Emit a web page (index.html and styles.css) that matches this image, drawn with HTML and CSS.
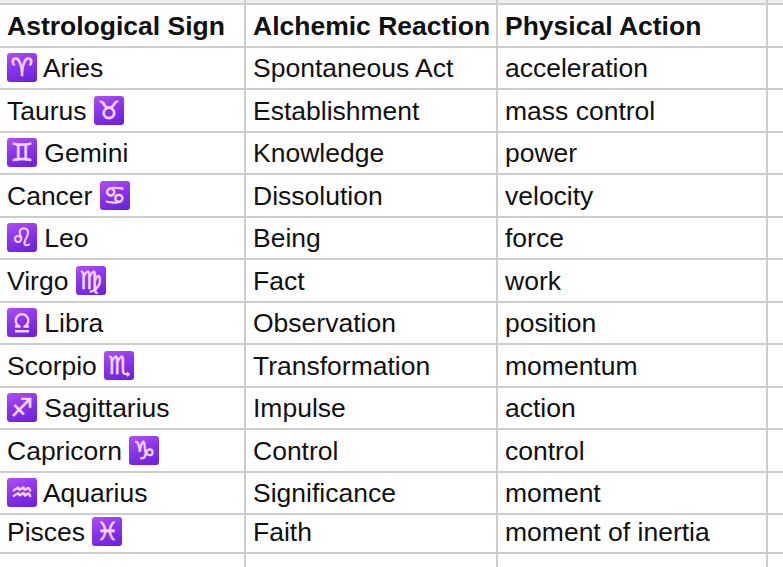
FILE: index.html
```html
<!DOCTYPE html>
<html>
<head>
<meta charset="utf-8">
<link rel="stylesheet" href="styles.css">
</head>
<body>
<div class="sheet">
  <div class="band"></div><div class="band"></div><div class="band"></div><div class="band"></div>

  <div class="cell r-a b"><span class="t">Astrological Sign</span></div><div class="cell r-a b"><span class="t">Alchemic Reaction</span></div><div class="cell r-a b"><span class="t">Physical Action</span></div><div class="cell r-a"></div>

  <div class="cell r-b"><span class="t"><span class="em">&#x2648;&#xFE0E;</span> Aries</span></div><div class="cell r-b"><span class="t">Spontaneous Act</span></div><div class="cell r-b"><span class="t">acceleration</span></div><div class="cell r-b"></div>

  <div class="cell r-a"><span class="t">Taurus <span class="em">&#x2649;&#xFE0E;</span></span></div><div class="cell r-a"><span class="t">Establishment</span></div><div class="cell r-a"><span class="t">mass control</span></div><div class="cell r-a"></div>

  <div class="cell r-b"><span class="t"><span class="em">&#x264A;&#xFE0E;</span> Gemini</span></div><div class="cell r-b"><span class="t">Knowledge</span></div><div class="cell r-b"><span class="t">power</span></div><div class="cell r-b"></div>

  <div class="cell r-a"><span class="t">Cancer <span class="em">&#x264B;&#xFE0E;</span></span></div><div class="cell r-a"><span class="t">Dissolution</span></div><div class="cell r-a"><span class="t">velocity</span></div><div class="cell r-a"></div>

  <div class="cell r-b"><span class="t"><span class="em">&#x264C;&#xFE0E;</span> Leo</span></div><div class="cell r-b"><span class="t">Being</span></div><div class="cell r-b"><span class="t">force</span></div><div class="cell r-b"></div>

  <div class="cell r-a"><span class="t">Virgo <span class="em">&#x264D;&#xFE0E;</span></span></div><div class="cell r-a"><span class="t">Fact</span></div><div class="cell r-a"><span class="t">work</span></div><div class="cell r-a"></div>

  <div class="cell r-b"><span class="t"><span class="em" role="img" aria-label="Libra"><svg class="glyph" viewBox="0 0 30 29" width="30" height="29"><path d="M8 18.5h4.6a6.4 6.4 0 1 1 4.8 0H22" fill="none" stroke="#f6d6ff" stroke-width="2.4" stroke-linejoin="round"/><path d="M8 23.2h14" fill="none" stroke="#f6d6ff" stroke-width="2.4"/></svg></span> Libra</span></div><div class="cell r-b"><span class="t">Observation</span></div><div class="cell r-b"><span class="t">position</span></div><div class="cell r-b"></div>

  <div class="cell r-a"><span class="t">Scorpio <span class="em">&#x264F;&#xFE0E;</span></span></div><div class="cell r-a"><span class="t">Transformation</span></div><div class="cell r-a"><span class="t">momentum</span></div><div class="cell r-a"></div>

  <div class="cell r-b"><span class="t"><span class="em">&#x2650;&#xFE0E;</span> Sagittarius</span></div><div class="cell r-b"><span class="t">Impulse</span></div><div class="cell r-b"><span class="t">action</span></div><div class="cell r-b"></div>

  <div class="cell r-a"><span class="t">Capricorn <span class="em">&#x2651;&#xFE0E;</span></span></div><div class="cell r-a"><span class="t">Control</span></div><div class="cell r-a"><span class="t">control</span></div><div class="cell r-a"></div>

  <div class="cell r-b"><span class="t"><span class="em">&#x2652;&#xFE0E;</span> Aquarius</span></div><div class="cell r-b"><span class="t">Significance</span></div><div class="cell r-b"><span class="t">moment</span></div><div class="cell r-b"></div>

  <div class="cell r-c"><span class="t">Pisces <span class="em">&#x2653;&#xFE0E;</span></span></div><div class="cell r-c"><span class="t">Faith</span></div><div class="cell r-c"><span class="t">moment of inertia</span></div><div class="cell r-c"></div>

  <div class="cell r-d"></div><div class="cell r-d"></div><div class="cell r-d"></div><div class="cell r-d"></div>
</div>
</body>
</html>
```
FILE: styles.css
```css
html, body {
  margin: 0;
  padding: 0;
  background: #ffffff;
}

.sheet {
  display: grid;
  grid-template-columns: 244px 250px 268px 1fr;
  column-gap: 2px;
  row-gap: 2px;
  background: #cdcdcd;
  width: 783px;
  height: 567px;
  overflow: hidden;
  font-family: "Liberation Sans", Arial, sans-serif;
  font-size: 26.5px;
  color: #111111;
}

.band {
  height: 3px;
  background: #efefef;
}

.cell {
  background: #ffffff;
  display: flex;
  align-items: flex-end;
  padding: 0 0 5px 7px;
  line-height: 30px;
  white-space: nowrap;
  box-sizing: border-box;
}

.t {
  display: block;
  white-space: pre;
}

.r-a { height: 41px; }
.r-b { height: 40px; }
.r-c { height: 37px; }
.r-d { height: 20px; }

.b {
  font-weight: bold;
}

.em {
  display: inline-block;
  width: 30px;
  height: 29px;
  line-height: 29px;
  overflow: hidden;
  vertical-align: -5px;
  text-align: center;
  border-radius: 3px;
  background: linear-gradient(160deg, #b24ef6 0%, #8a35ea 45%, #6a1fd6 100%);
  color: #f6d6ff;
  font-family: "DejaVu Sans", sans-serif;
  font-size: 25px;
  font-weight: bold;
  -webkit-text-stroke: 0.6px #f6d6ff;
}

.glyph {
  display: block;
}
```
